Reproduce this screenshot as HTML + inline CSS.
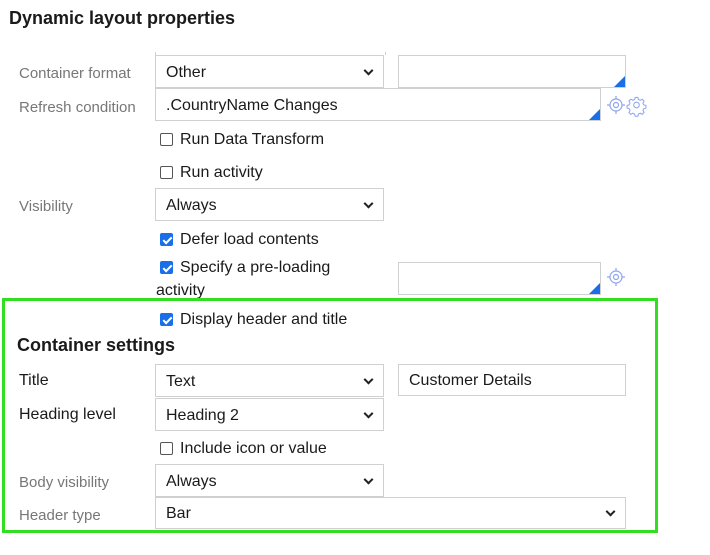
<!DOCTYPE html>
<html><head><meta charset="utf-8"><style>
body{margin:0;width:710px;height:555px;background:#fff;font-family:"Liberation Sans",sans-serif;position:relative;overflow:hidden;color:#222}
.a{position:absolute;white-space:nowrap}
.h{font-weight:bold;font-size:18px;color:#1a1a1a}
.lbl{font-size:15px;color:#777;margin-top:2px}
.lblk{font-size:16px;color:#1a1a1a;margin-top:1px}
.box{position:absolute;border:1px solid #d0d0d0;box-sizing:border-box;background:#fff;font-size:16px;color:#1a1a1a;padding-left:10px;padding-top:2px;display:flex;align-items:center}
.sel::after{content:"";position:absolute;right:11px;top:50%;width:5px;height:5px;border-right:2px solid #222;border-bottom:2px solid #222;transform:translateY(-70%) rotate(45deg)}
.tri{position:absolute;right:0;bottom:0;width:0;height:0;border-left:11px solid transparent;border-bottom:11px solid #1a6fe8}
.cb{position:absolute;width:13px;height:13px;border:1.5px solid #555;border-radius:2px;box-sizing:border-box}
.cb.on{background:#1a6fe8;border-color:#1a6fe8}
.cb.on::after{content:"";position:absolute;left:3.5px;top:0.5px;width:3px;height:7px;border-right:2px solid #fff;border-bottom:2px solid #fff;transform:rotate(45deg)}
.ct{font-size:16px;color:#1a1a1a}
</style></head><body>
<div class="a h" style="left:9px;top:8px">Dynamic layout properties</div>
<div class="a" style="left:155px;top:52px;width:229px;height:3px;border:1px solid #d0d0d0;border-top:none;border-bottom:none"></div>

<div class="a lbl" style="left:19px;top:63px">Container format</div>
<div class="box sel" style="left:155px;top:55px;width:229px;height:33px">Other</div>
<div class="box" style="left:398px;top:55px;width:228px;height:33px"><div class="tri"></div></div>

<div class="a lbl" style="left:19px;top:97px">Refresh condition</div>
<div class="box" style="left:155px;top:88px;width:446px;height:33px">.CountryName Changes<div class="tri"></div></div>
<svg class="a" style="left:605px;top:93px" width="46" height="24" viewBox="0 0 46 24" fill="none" stroke="#8fa4f0" stroke-width="1.2">
<circle cx="11" cy="12" r="6"/><circle cx="11" cy="12" r="2.5"/><path d="M11 3v3M11 18v3M2 12h3M17 12h3"/>
<g transform="translate(31.5 12) scale(0.85)"><circle r="3.3"/><path d="M-1.6-9h3.2l.6 2.5 2.2 1 2.3-1.3 2.2 2.2-1.3 2.3 1 2.2 2.5.6v3.2l-2.5.6-1 2.2 1.3 2.3-2.2 2.2-2.3-1.3-2.2 1-.6 2.5h-3.2l-.6-2.5-2.2-1-2.3 1.3-2.2-2.2 1.3-2.3-1-2.2-2.5-.6v-3.2l2.5-.6 1-2.2-1.3-2.3 2.2-2.2 2.3 1.3 2.2-1z"/></g>
</svg>

<div class="cb" style="left:160px;top:133px"></div><div class="a ct" style="left:180px;top:131px">Run Data Transform</div>
<div class="cb" style="left:160px;top:166px"></div><div class="a ct" style="left:180px;top:164px">Run activity</div>

<div class="a lbl" style="left:19px;top:196px">Visibility</div>
<div class="box sel" style="left:155px;top:188px;width:229px;height:33px">Always</div>

<div class="cb on" style="left:160px;top:233px"></div><div class="a ct" style="left:180px;top:231px">Defer load contents</div>
<div class="cb on" style="left:160px;top:261px"></div><div class="a ct" style="left:180px;top:259px">Specify a pre-loading</div>
<div class="a ct" style="left:156px;top:282px">activity</div>
<div class="box" style="left:398px;top:262px;width:203px;height:33px"><div class="tri"></div></div>
<svg class="a" style="left:605px;top:265px" width="22" height="24" viewBox="0 0 22 24" fill="none" stroke="#8fa4f0" stroke-width="1.2"><circle cx="11" cy="12" r="6"/><circle cx="11" cy="12" r="2.5"/><path d="M11 3v3M11 18v3M2 12h3M17 12h3"/></svg>

<div class="a" style="left:2px;top:298px;width:656px;height:235px;border:3px solid #33dd22;box-sizing:border-box"></div>

<div class="cb on" style="left:160px;top:313px"></div><div class="a ct" style="left:180px;top:311px">Display header and title</div>
<div class="a h" style="left:17px;top:335px">Container settings</div>

<div class="a lblk" style="left:19px;top:371px">Title</div>
<div class="box sel" style="left:155px;top:364px;width:229px;height:33px">Text</div>
<div class="box" style="left:398px;top:364px;width:228px;height:32px">Customer Details</div>

<div class="a lblk" style="left:19px;top:405px">Heading level</div>
<div class="box sel" style="left:155px;top:398px;width:229px;height:33px">Heading 2</div>

<div class="cb" style="left:160px;top:442px"></div><div class="a ct" style="left:180px;top:440px">Include icon or value</div>

<div class="a lbl" style="left:19px;top:472px">Body visibility</div>
<div class="box sel" style="left:155px;top:464px;width:229px;height:33px">Always</div>

<div class="a lbl" style="left:19px;top:505px">Header type</div>
<div class="box sel" style="left:155px;top:497px;width:471px;height:32px">Bar</div>
</body></html>
